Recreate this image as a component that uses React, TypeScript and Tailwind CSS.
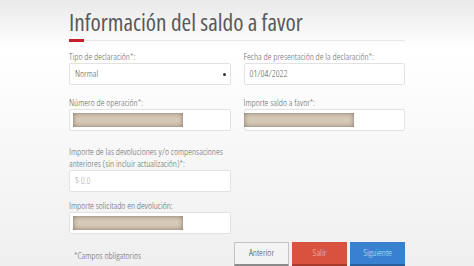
import React from "react";

const thin = "font-light font-stretch-condensed text-[9.6px]";

function Field({
  label,
  children,
  className = "",
}: {
  label: React.ReactNode;
  children: React.ReactNode;
  className?: string;
}) {
  return (
    <div className={`flex flex-col ${className}`}>
      <label className={`leading-[12px] text-[#666] ${thin}`}>{label}</label>
      <div className="relative flex h-[22px] items-center rounded-[2px] border border-[#e2e2e2] bg-white px-[5px]">
        {children}
      </div>
    </div>
  );
}

function Redacted({ className = "" }: { className?: string }) {
  // masked value in the original capture
  return (
    <div
      className={`h-[14px] w-[110px] bg-[#d6c9b6] shadow-[inset_0_0_5px_#7f7466] blur-[0.7px] ${className}`}
    />
  );
}

export default function App() {
  return (
    <div
      className="h-[266px] w-[474px] overflow-hidden bg-gradient-to-b from-[#e9e9e9] via-white via-[18%] to-[#efefef]"
      style={{ fontFamily: '"Open Sans", "Liberation Sans", sans-serif' }}
    >
      <div className="ml-[69px] w-[336px] pt-[7px]">
        <h1 className="text-[23.3px] leading-[30px] text-[#595959] font-stretch-condensed">
          Información del saldo a favor
        </h1>
        <div className="mt-[2px] flex items-center">
          <div className="h-[3px] w-[15px] bg-[#c8202a]" />
          <div className="h-px flex-1 bg-[#e8e8e8]" />
        </div>

        <div className="mt-[9px] grid grid-cols-2 gap-x-[13px]">
          <Field label="Tipo de declaración*:">
            <span className={`text-[#555] ${thin}`}>Normal</span>
            <span className="absolute right-[4px] top-[9px] h-[3px] w-[3px] rounded-full bg-[#333]" />
          </Field>
          <Field label="Fecha de presentación de la declaración*:">
            <span className={`text-[#555] ${thin}`}>01/04/2022</span>
          </Field>

          <Field label="Número de operación*:" className="mt-[12px]">
            <Redacted className="-ml-[2px]" />
          </Field>
          <Field label="Importe saldo a favor*:" className="mt-[12px]">
            <Redacted className="-ml-[6px]" />
          </Field>

          <Field
            label={
              <>
                Importe de las devoluciones y/o compensaciones
                <br />
                anteriores (sin incluir actualización)*:
              </>
            }
            className="mt-[15px]"
          >
            <span className={`text-[#aaa] ${thin}`}>$ 0.0</span>
          </Field>
          <div />

          <Field label="Importe solicitado en devolución:" className="mt-[8px]">
            <Redacted className="-ml-[2px]" />
          </Field>
          <div />
        </div>

        <div className="mt-[8px] flex items-start">
          <span className={`ml-[5px] mt-[7px] w-[161px] text-[#666] ${thin}`}>
            *Campos obligatorios
          </span>
          <div className="flex gap-[3px]">
            <button
              className={`h-[24px] w-[55px] border border-b-2 border-[#c4c4c4] border-b-[#8a8a8a] bg-[#f3f3f3] text-[#444] ${thin}`}
            >
              Anterior
            </button>
            <button
              className={`h-[24px] w-[55px] border-b-2 border-[#a83a2c] bg-[#d9513f] text-[#f6c9c0] ${thin}`}
            >
              Salir
            </button>
            <button
              className={`h-[24px] w-[55px] border-b-2 border-[#2a5f9e] bg-[#3a80d0] text-[#cfe2f7] ${thin}`}
            >
              Siguiente
            </button>
          </div>
        </div>
      </div>
    </div>
  );
}
